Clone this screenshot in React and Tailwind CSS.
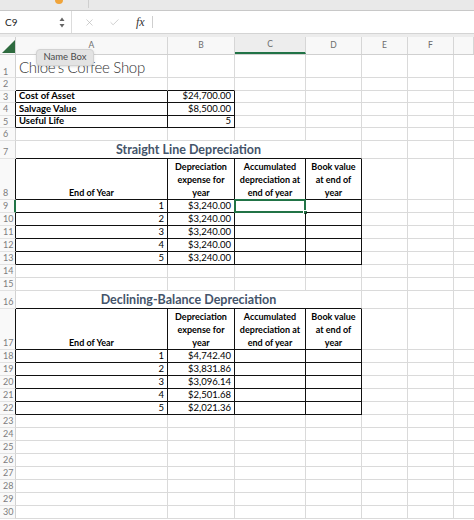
import React from 'react';
import clsx from 'clsx';
import { X, Check } from 'lucide-react';

const COLS = ['w-[152px]', 'w-[67px]', 'w-[71px]', 'w-[56px]', 'w-[46px]', 'w-[46px]', 'w-[20px]'];
const LETTERS = ['A', 'B', 'C', 'D', 'E', 'F', ''];

const label = (t) => <span className="pl-[3px] font-bold text-[9.5px] leading-[12px] text-black">{t}</span>;
const num = (t) => <span className="ml-auto pr-[3px] text-[9.5px] leading-[12px] text-black">{t}</span>;
const head = (lines) => (
  <div className="w-full flex flex-col items-center font-bold text-[9px] leading-[13px] text-black">
    {lines.map((l) => (
      <span key={l}>{l}</span>
    ))}
  </div>
);

const straight = ['$3,240.00', '$3,240.00', '$3,240.00', '$3,240.00', '$3,240.00'];
const declining = ['$4,742.40', '$3,831.86', '$3,096.14', '$2,501.68', '$2,021.36'];

function tableRows(start, values) {
  return values.map((v, i) => ({
    n: start + i,
    h: 'h-[13px]',
    table: 4,
    cells: { 0: num(String(i + 1)), 1: num(v) },
  }));
}

function headerRow(n) {
  return {
    n,
    h: 'h-[41px]',
    table: 4,
    cells: {
      0: <span className="w-full text-center font-bold text-[9px] leading-[13px]">End of Year</span>,
      1: head(['Depreciation', 'expense for', 'year']),
      2: head(['Accumulated', 'depreciation at', 'end of year']),
      3: head(['Book value', 'at end of', 'year']),
    },
  };
}

const rows = [
  {
    n: 1,
    h: 'h-[23px]',
    cells: {
      0: (
        <span className="pl-[3px] pb-[2px] text-[15px] leading-none font-light text-[#333] tracking-[-0.3px]">
          Chloe's Coffee Shop
        </span>
      ),
    },
  },
  { n: 2, h: 'h-[12.6px]', edge: 2 },
  { n: 3, h: 'h-[12.6px]', table: 2, cells: { 0: label('Cost of Asset'), 1: num('$24,700.00') } },
  { n: 4, h: 'h-[12.6px]', table: 2, cells: { 0: label('Salvage Value'), 1: num('$8,500.00') } },
  { n: 5, h: 'h-[12.6px]', table: 2, cells: { 0: label('Useful Life'), 1: num('5') } },
  { n: 6, h: 'h-[12.6px]' },
  { n: 7, h: 'h-[18px]', edge: 4, merge: 'Straight Line Depreciation' },
  headerRow(8),
  ...tableRows(9, straight),
  { n: 14, h: 'h-[13px]' },
  { n: 15, h: 'h-[13px]' },
  { n: 16, h: 'h-[18px]', edge: 4, merge: 'Declining-Balance Depreciation' },
  headerRow(17),
  ...tableRows(18, declining),
  ...[23, 24, 25, 26, 27, 28, 29, 30].map((n) => ({ n, h: 'h-[13px]' })),
];

function Row({ r }) {
  const table = r.table || 0;
  const edge = Math.max(r.edge || 0, table);
  const selectedRow = r.n === 9;
  return (
    <div className={clsx('flex', r.h)}>
      <div
        className={clsx(
          'w-[16px] shrink-0 flex items-end pl-[3px] pb-[1.5px] border-b border-b-[#e2e2e2] bg-[#f9f9f9] text-[9px] leading-none text-[#7d7d7d]',
          selectedRow ? 'border-r-2 border-r-[#217346]' : 'border-r',
          !selectedRow && (table ? 'border-r-[#111]' : 'border-r-[#d2d2d2]')
        )}
      >
        {r.n}
      </div>
      {r.merge ? (
        <div className="w-[346px] shrink-0 flex items-end justify-center border-b border-b-[#111] border-r border-r-[#dadada]">
          <span className="font-bold text-[12.5px] leading-[16px] text-[#44546a]">{r.merge}</span>
        </div>
      ) : null}
      {COLS.map((w, i) => {
        if (r.merge && i < 4) return null;
        const selected = r.n === 9 && i === 2;
        return (
          <div
            key={i}
            className={clsx(
              w,
              'shrink-0 relative flex items-end border-b border-r whitespace-nowrap',
              i < edge ? 'border-b-[#111]' : 'border-b-[#dadada]',
              i < table ? 'border-r-[#111]' : 'border-r-[#dadada]',
              i === 6 && 'border-r-0'
            )}
          >
            {r.cells && r.cells[i]}
            {selected && (
              <div className="absolute -left-[1px] -top-[1px] -right-[1px] -bottom-[1px] border-2 border-[#217346]">
                <div className="absolute -right-[4px] -bottom-[4px] w-[5px] h-[5px] bg-[#217346] border border-white" />
              </div>
            )}
          </div>
        );
      })}
    </div>
  );
}

export default function App() {
  return (
    <div className="relative w-[474px] h-[520px] overflow-hidden bg-white font-['Lato','Liberation_Sans',sans-serif]">
      {/* ribbon strip, cut off */}
      <div className="relative h-[11px] bg-[#e9e9e9] border-b border-[#c8c8c8]">
        <div className="absolute left-[55px] -top-[4px] w-[8px] h-[8px] rounded-full bg-[#f0a43a]" />
        <div className="absolute left-[88px] top-0 h-[8px] w-px bg-[#cfcfcf]" />
      </div>

      {/* formula bar */}
      <div className="flex items-center h-[23px] bg-white border-b border-[#d4d4d4]">
        <div className="flex items-center w-[72px] h-full pl-[5px] border-r border-[#dcdcdc]">
          <span className="text-[10px] text-[#222]">C9</span>
          <svg className="ml-auto mr-[6px]" width="6" height="11" viewBox="0 0 6 11">
            <path d="M3 0.5 L5.5 4 L0.5 4 Z" fill="#666" />
            <path d="M3 10.5 L5.5 7 L0.5 7 Z" fill="#666" />
          </svg>
        </div>
        <X className="ml-[12px]" size={11} strokeWidth={1.4} color="#b5b5b5" />
        <Check className="ml-[14px]" size={11} strokeWidth={1.4} color="#b5b5b5" />
        <span className="ml-[16px] italic text-[12px] text-[#333] font-['Liberation_Serif',serif]">fx</span>
        <div className="ml-[7px] h-[12px] w-px bg-[#cfcfcf]" />
      </div>
      <div className="h-[3px] bg-[#ececec]" />

      {/* column headers */}
      <div className="flex h-[18px] bg-[#f8f8f8] border-b border-[#d0d0d0]">
        <div className="w-[16px] shrink-0 relative border-r border-[#d0d0d0]">
          <svg className="absolute left-[2px] top-[3px]" width="13" height="13" viewBox="0 0 13 13">
            <path d="M0 13 L13 13 L13 0 Z" fill="#2e6b3f" />
          </svg>
        </div>
        {COLS.map((w, i) => (
          <div
            key={i}
            className={clsx(
              w,
              'shrink-0 flex items-center justify-center text-[8.5px] text-[#6d6d6d] border-r border-[#d6d6d6]',
              i === 2 && 'border-b-2 border-b-[#217346] bg-[#ededed]'
            )}
          >
            {LETTERS[i]}
          </div>
        ))}
      </div>

      {rows.map((r) => (
        <Row key={r.n} r={r} />
      ))}

      {/* Name Box tooltip */}
      <div className="absolute left-[36px] top-[49px] w-[58px] h-[17px] flex items-center justify-center rounded-[4px] bg-[#e3e3e3] border border-[#d2d2d2] shadow-sm text-[9.5px] text-[#4a4a4a]">
        Name Box
      </div>
    </div>
  );
}
